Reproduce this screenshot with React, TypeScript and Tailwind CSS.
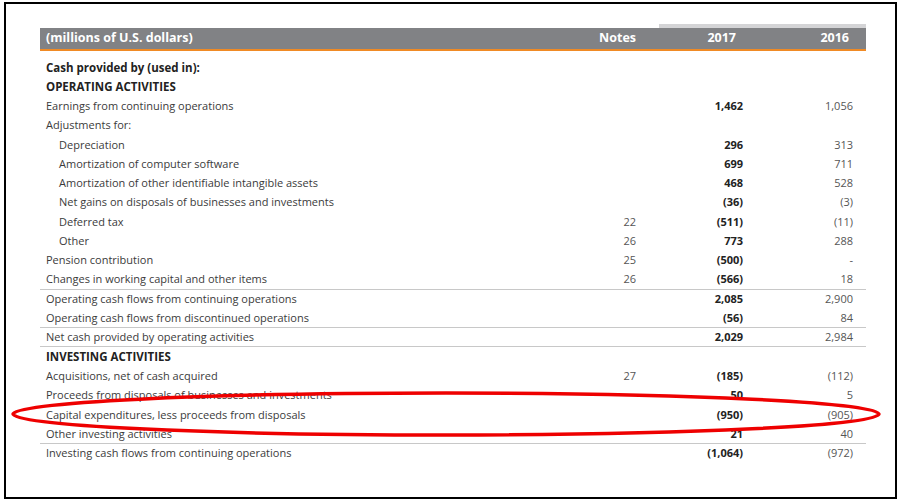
import React from "react";

type R = { l: string; n?: string; a?: string; b?: string; ind?: boolean; bold?: boolean; line?: boolean };
const rows: R[] = [
  { l: "Cash provided by (used in):", bold: true },
  { l: "OPERATING ACTIVITIES", bold: true },
  { l: "Earnings from continuing operations", a: "1,462", b: "1,056" },
  { l: "Adjustments for:" },
  { l: "Depreciation", ind: true, a: "296", b: "313" },
  { l: "Amortization of computer software", ind: true, a: "699", b: "711" },
  { l: "Amortization of other identifiable intangible assets", ind: true, a: "468", b: "528" },
  { l: "Net gains on disposals of businesses and investments", ind: true, a: "(36)", b: "(3)" },
  { l: "Deferred tax", ind: true, n: "22", a: "(511)", b: "(11)" },
  { l: "Other", ind: true, n: "26", a: "773", b: "288" },
  { l: "Pension contribution", n: "25", a: "(500)", b: "-" },
  { l: "Changes in working capital and other items", n: "26", a: "(566)", b: "18", line: true },
  { l: "Operating cash flows from continuing operations", a: "2,085", b: "2,900" },
  { l: "Operating cash flows from discontinued operations", a: "(56)", b: "84", line: true },
  { l: "Net cash provided by operating activities", a: "2,029", b: "2,984", line: true },
  { l: "INVESTING ACTIVITIES", bold: true },
  { l: "Acquisitions, net of cash acquired", n: "27", a: "(185)", b: "(112)" },
  { l: "Proceeds from disposals of businesses and investments", a: "50", b: "5" },
  { l: "Capital expenditures, less proceeds from disposals", a: "(950)", b: "(905)" },
  { l: "Other investing activities", a: "21", b: "40", line: true },
  { l: "Investing cash flows from continuing operations", a: "(1,064)", b: "(972)" },
];

export default function App() {
  return (
    <div className="w-[901px] h-[503px] bg-white p-[2px_4px_4px_4px]" style={{ fontFamily: '"Open Sans", sans-serif' }}>
      <div className="relative w-[893px] h-[497px] border-2 border-black">
        <div className="ml-[34px] mt-[20px] w-[826px]">
          <div className="flex justify-end"><div className="w-[207px] h-[4px] bg-[#d4d4d6]" /></div>
          <div className="flex items-center h-[23px] bg-[#818285] text-white font-bold text-[12.5px] border-b-2 border-[#f08a24]">
            <div className="flex-1 pl-[6px]">(millions of U.S. dollars)</div>
            <div className="w-[60px] text-right">Notes</div>
            <div className="w-[100px] text-right">2017</div>
            <div className="w-[130px] text-right pr-[17px]">2016</div>
          </div>
          <div className="mt-[7px] text-[11px] text-[#3b3b3b]">
            {rows.map((r, i) => (
              <div key={i} className={`flex items-center h-[19.3px] ${r.line ? "border-b border-[#c8c8c8]" : ""}`}>
                <div className={`flex-1 ${r.ind ? "pl-[19px]" : "pl-[6px]"} ${r.bold ? "font-bold text-[#222] text-[11.5px]" : ""}`}>{r.l}</div>
                <div className="w-[60px] text-right text-[#555]">{r.n}</div>
                <div className="w-[107px] text-right font-bold text-[#222]">{r.a}</div>
                <div className="w-[123px] text-right pr-[13px] text-[#555]">{r.b}</div>
              </div>
            ))}
          </div>
        </div>
        <svg className="absolute left-0 top-0 pointer-events-none" width="893" height="497">
          <ellipse cx="440" cy="410" rx="433" ry="21" fill="none" stroke="#ee0000" strokeWidth="3.5" />
        </svg>
      </div>
    </div>
  );
}
